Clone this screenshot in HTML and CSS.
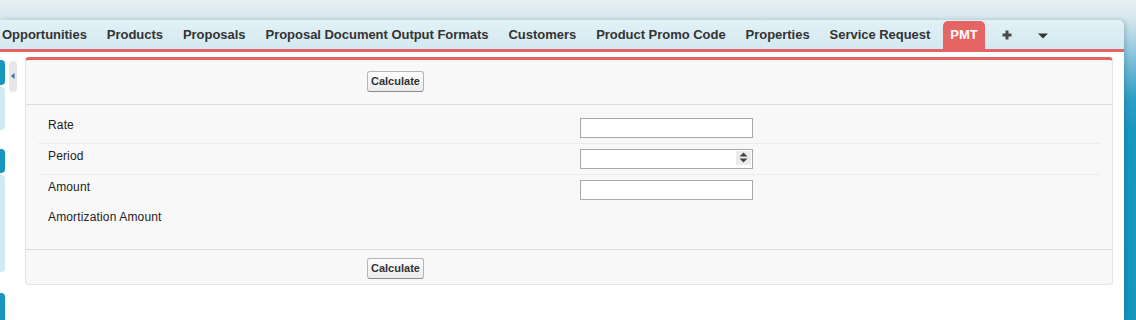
FILE: index.html
```html
<!DOCTYPE html>
<html>
<head>
<meta charset="utf-8">
<link rel="stylesheet" href="styles.css">
</head>
<body>
<div class="shell">
  <div class="tabbar">
    <ul class="tabs">
      <li class="tab">Opportunities</li>
      <li class="tab">Products</li>
      <li class="tab">Proposals</li>
      <li class="tab">Proposal Document Output Formats</li>
      <li class="tab">Customers</li>
      <li class="tab">Product Promo Code</li>
      <li class="tab">Properties</li>
      <li class="tab">Service Request</li>
      <li class="tab tab-active">PMT</li>
      <li class="tab tab-plus"><svg width="10" height="10" viewBox="0 0 10 10"><rect x="3.5" y="0.5" width="3" height="9" fill="#4a4a4a"/><rect x="0.5" y="3.5" width="9" height="3" fill="#4a4a4a"/></svg></li>
      <li class="tab tab-more"><svg width="10" height="6" viewBox="0 0 10 6"><polygon points="0,0.5 10,0.5 5,5.5" fill="#333"/></svg></li>
    </ul>
  </div>
  <div class="main">
    <div class="sidebar">
      <div class="sb-head sb-h1"></div>
      <div class="sb-body sb-b1"></div>
      <div class="sb-head sb-h2"></div>
      <div class="sb-body sb-b2"></div>
      <div class="sb-head sb-h3"></div>
    </div>
    <div class="handle"><svg width="4" height="6" viewBox="0 0 4 6"><polygon points="3.5,0 3.5,6 0,3" fill="#2d6fbf"/></svg></div>
    <div class="panel">
      <div class="pb-header"><button class="btn">Calculate</button></div>
      <div class="pb-body">
        <div class="row row-line">
          <label class="lbl">Rate</label>
          <div class="field"><input class="inp" type="text"></div>
        </div>
        <div class="row row-line">
          <label class="lbl">Period</label>
          <div class="field">
            <div class="num">
              <input class="num-inp" type="text">
              <span class="spin"><svg width="15" height="14" viewBox="0 0 15 14"><polygon points="3.5,5.5 7.5,1.5 11.5,5.5" fill="#444"/><polygon points="3.5,7.5 11.5,7.5 7.5,11.5" fill="#444"/></svg></span>
            </div>
          </div>
        </div>
        <div class="row">
          <label class="lbl">Amount</label>
          <div class="field"><input class="inp" type="text"></div>
        </div>
        <div class="row">
          <label class="lbl">Amortization Amount</label>
          <div class="field"></div>
        </div>
      </div>
      <div class="pb-footer"><button class="btn">Calculate</button></div>
    </div>
  </div>
</div>
</body>
</html>
```
FILE: styles.css
```css
html, body {
  margin: 0;
  padding: 0;
}
body {
  width: 1136px;
  height: 320px;
  overflow: hidden;
  font-family: "Liberation Sans", Arial, sans-serif;
  background: linear-gradient(to bottom, #e8f0f4 0, #d2e5ec 20px, #aad3e2 40px, #66b7d4 70px, #2c9ec6 100px, #1a97c0 130px, #1795bf 100%);
}
.shell {
  margin-top: 20px;
  width: 1124px;
  height: 300px;
  background: #fff;
  border-top-right-radius: 6px;
  box-shadow: 2px 0 4px rgba(0, 40, 70, 0.18);
}
.tabbar {
  height: 29px;
  background: linear-gradient(to bottom, #e2f1f6, #d3e9f0);
  border-top-right-radius: 6px;
  border-bottom: 3px solid #e36464;
  overflow: hidden;
}
.tabs {
  list-style: none;
  margin: 0 0 0 -8px;
  padding: 0;
  display: flex;
  height: 29px;
  align-items: flex-end;
}
.tab {
  margin: 0 3px;
  padding: 0 7px;
  height: 27px;
  padding-bottom: 1px;
  line-height: 27px;
  font-size: 13px;
  font-weight: bold;
  letter-spacing: -0.03px;
  color: #333;
  white-space: nowrap;
}
.tab-active {
  background: #e56565;
  color: #fff;
  border-radius: 5px 5px 0 0;
}
.tab-plus {
  padding: 0 11px;
  display: flex;
  align-items: center;
}
.tab-plus svg {
  margin-top: -2px;
}
.tab-more {
  padding: 0 9px;
  display: flex;
  align-items: center;
}
.tab-more svg {
  margin-top: 1px;
}
.main {
  display: flex;
  align-items: flex-start;
}
.sidebar {
  width: 5px;
  padding-top: 8px;
  display: flex;
  flex-direction: column;
}
.sb-head {
  background: #1797c0;
  border-radius: 0 4px 4px 0;
}
.sb-body {
  background: #cdeaf6;
  border-radius: 0 4px 4px 0;
  margin-top: 2px;
}
.sb-h1 { height: 25px; }
.sb-b1 { height: 43px; }
.sb-h2 { height: 24px; margin-top: 19px; }
.sb-b2 { height: 97px; }
.sb-h3 { height: 40px; margin-top: 21px; }
.handle {
  margin: 9px 0 0 4px;
  width: 8px;
  height: 31px;
  background: #e6e6e6;
  border-radius: 4px;
  display: flex;
  align-items: center;
  justify-content: center;
}
.handle svg {
  margin-top: -2px;
}
.panel {
  margin: 5px 0 0 8px;
  width: 1088px;
  box-sizing: border-box;
  background: #f8f8f8;
  border: 1px solid #e4e4e4;
  border-top: 3px solid #e36464;
  border-radius: 4px;
}
.pb-header {
  padding: 11px 0 12px 341px;
  border-bottom: 1px solid #dbdbdb;
}
.pb-footer {
  padding: 8px 0 5px 341px;
  border-top: 1px solid #dbdbdb;
}
.btn {
  display: block;
  margin: 0;
  font-family: "Liberation Sans", Arial, sans-serif;
  font-size: 11px;
  font-weight: bold;
  line-height: 13px;
  color: #333;
  padding: 3px 3px;
  border: 1px solid #b5b5b5;
  border-bottom-color: #8a8a8a;
  border-radius: 3px;
  background: linear-gradient(to bottom, #fdfdfd, #ececec);
}
.pb-body {
  padding: 8px 12px 14px;
}
.row {
  display: grid;
  grid-template-columns: 542px 1fr;
  padding: 5px 0;
  min-height: 20px;
}
.row-line {
  border-bottom: 1px solid #ececec;
}
.lbl {
  padding-left: 10px;
  font-size: 12px;
  line-height: 14px;
  letter-spacing: 0.15px;
  color: #222;
}
.field {
  display: flex;
}
.inp {
  width: 173px;
  height: 20px;
  box-sizing: border-box;
  border: 1px solid #a9a9a9;
  background: #fff;
  padding: 0 2px;
  margin: 0;
  font-size: 12px;
  outline: none;
}
.num {
  width: 173px;
  height: 20px;
  box-sizing: border-box;
  border: 1px solid #a9a9a9;
  background: #fff;
  display: flex;
  align-items: flex-start;
}
.num-inp {
  flex: 1;
  min-width: 0;
  height: 18px;
  border: none;
  padding: 0 2px;
  margin: 0;
  font-size: 12px;
  outline: none;
  background: transparent;
}
.spin {
  width: 15px;
  height: 14px;
  margin: 1px 1px 0 0;
  background: #ececec;
  display: block;
}
.spin svg {
  display: block;
}
```
